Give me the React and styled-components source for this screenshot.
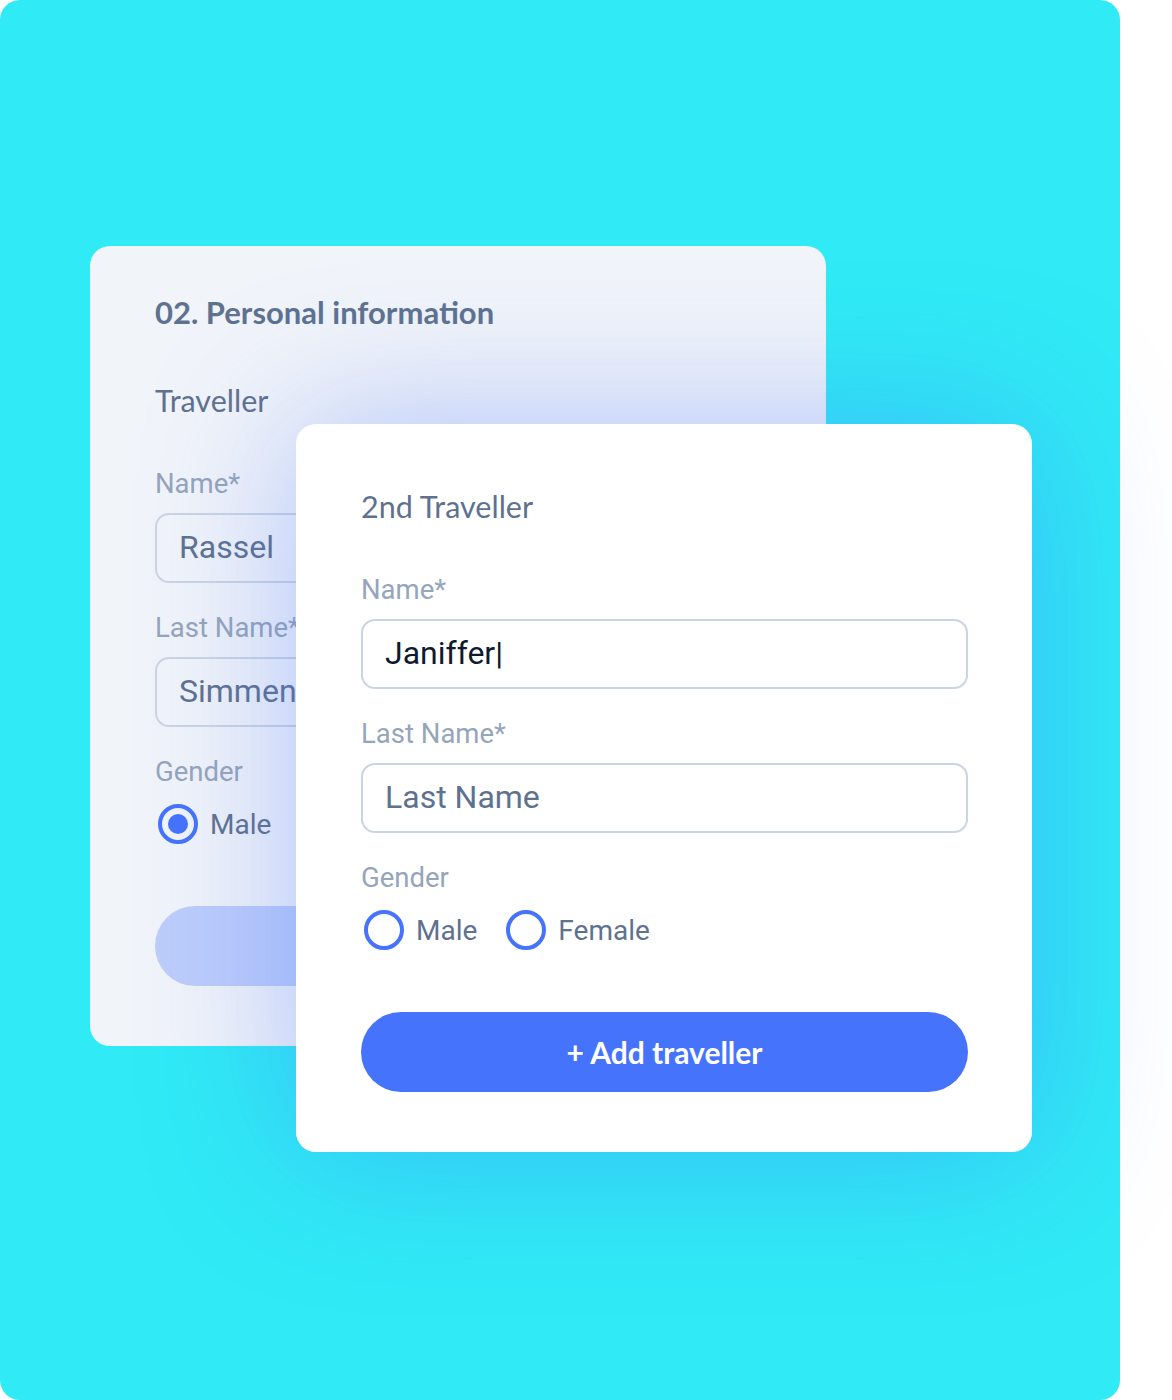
import React from "react";
import styled, { createGlobalStyle } from "styled-components";

const GlobalStyle = createGlobalStyle`
  * { box-sizing: border-box; }
  body {
    margin: 0;
    background: #ffffff;
    font-family: "Roboto", "Liberation Sans", sans-serif;
  }
`;

const Panel = styled.div`
  width: 1120px;
  height: 1400px;
  background: #30eaf5;
  border-radius: 20px;
  padding: 246px 0 0 90px;
  display: grid;
  grid-template-columns: max-content;
  grid-template-rows: max-content;
  align-items: start;
`;

const Card = styled.div`
  grid-area: 1 / 1;
  align-self: start;
  width: 736px;
  border-radius: 20px;
  padding: ${({ $top }) => $top}px 64px 60px 65px;
  background: ${({ $front }) => ($front ? "#ffffff" : "#f1f4f9")};
  margin: ${({ $front }) => ($front ? "178px 0 0 206px" : "0")};
  box-shadow: ${({ $front }) =>
    $front ? "0 0 150px rgba(69, 115, 252, 0.4)" : "none"};
  display: flex;
  flex-direction: column;
  z-index: ${({ $front }) => ($front ? 2 : 1)};
`;

const Heading = styled.h2`
  margin: 0 0 48px;
  font-family: "Lato", "Open Sans", sans-serif;
  font-weight: 700;
  font-size: 31px;
  line-height: 40px;
  color: #5e7290;
`;

const Title = styled.h3`
  margin: 0 0 49px;
  font-family: "Lato", "Open Sans", sans-serif;
  font-weight: 400;
  font-size: 30.5px;
  line-height: 40px;
  color: #5e7290;
`;

const Label = styled.div`
  font-size: 27.5px;
  line-height: 30px;
  color: #95a5bb;
  margin-bottom: 14px;
  white-space: nowrap;
`;

const Field = styled.div`
  height: 70px;
  border: 2px solid #cad5e3;
  border-radius: 14px;
  padding: 0 22px;
  font-size: 32px;
  line-height: 64px;
  color: ${({ $filled }) => ($filled ? "#0f1a2e" : "#5e7290")};
  margin-bottom: 30px;
  white-space: nowrap;
  overflow: hidden;
`;

const RadioRow = styled.div`
  display: flex;
  align-items: center;
  gap: 29px;
  margin-top: 3px;
  padding-left: 3px;
  height: 40px;
`;

const RadioOption = styled.label`
  display: flex;
  align-items: center;
  gap: 12px;
  font-size: 28px;
  color: #5e7290;
`;

const Radio = styled.span`
  width: 40px;
  height: 40px;
  border-radius: 50%;
  border: 4px solid #4573fc;
  display: flex;
  align-items: center;
  justify-content: center;
  flex-shrink: 0;

  &::after {
    content: "";
    width: 20px;
    height: 20px;
    border-radius: 50%;
    background: ${({ $checked }) => ($checked ? "#4573fc" : "transparent")};
  }
`;

const Button = styled.button`
  margin-top: 62px;
  height: 80px;
  border: none;
  border-radius: 40px;
  background: ${({ $muted }) =>
    $muted ? "rgba(69, 115, 252, 0.3)" : "#4573fc"};
  color: #ffffff;
  font-family: "Lato", "Open Sans", sans-serif;
  font-weight: 700;
  font-size: 30px;
  cursor: pointer;
`;

export default function App() {
  return (
    <>
      <GlobalStyle />
      <Panel>
        <Card $top={46}>
          <Heading>02. Personal information</Heading>
          <Title>Traveller</Title>
          <Label>Name*</Label>
          <Field>Rassel</Field>
          <Label>Last Name*</Label>
          <Field>Simmen</Field>
          <Label>Gender</Label>
          <RadioRow>
            <RadioOption>
              <Radio $checked />
              Male
            </RadioOption>
          </RadioRow>
          <Button $muted />
        </Card>
        <Card $front $top={62}>
          <Title>2nd Traveller</Title>
          <Label>Name*</Label>
          <Field $filled>Janiffer|</Field>
          <Label>Last Name*</Label>
          <Field>Last Name</Field>
          <Label>Gender</Label>
          <RadioRow>
            <RadioOption>
              <Radio />
              Male
            </RadioOption>
            <RadioOption>
              <Radio />
              Female
            </RadioOption>
          </RadioRow>
          <Button>+ Add traveller</Button>
        </Card>
      </Panel>
    </>
  );
}
